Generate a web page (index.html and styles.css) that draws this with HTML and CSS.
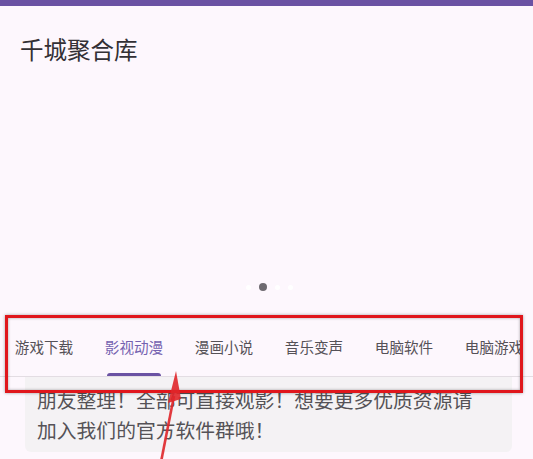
FILE: index.html
```html
<!DOCTYPE html>
<html>
<head>
	<title>千城聚合库</title>
	<meta charset="utf-8">
	<link rel="stylesheet" href="styles.css">
</head>
<body>
	<div class="page">
		<!-- 顶部状态色条 -->
		<div class="top-bar"></div>
		<!-- 标题 -->
		<div class="header">
			<h1 class="header-title">千城聚合库</h1>
		</div>
		<!-- 轮播区域 -->
		<div class="banner">
			<ul class="banner-dots">
				<li class="banner-dot"></li>
				<li class="banner-dot active"></li>
				<li class="banner-dot"></li>
				<li class="banner-dot"></li>
			</ul>
		</div>
		<!-- 分类标签 -->
		<div class="tabs">
			<div class="tab"><span class="tab-text">游戏下载</span></div>
			<div class="tab active"><span class="tab-text">影视动漫</span><span class="tab-indicator"></span></div>
			<div class="tab"><span class="tab-text">漫画小说</span></div>
			<div class="tab"><span class="tab-text">音乐变声</span></div>
			<div class="tab"><span class="tab-text">电脑软件</span></div>
			<div class="tab"><span class="tab-text">电脑游戏</span></div>
		</div>
		<!-- 说明卡片 -->
		<div class="notice">
			<p class="notice-text">朋友整理！全部可直接观影！想要更多优质资源请加入我们的官方软件群哦！</p>
		</div>

		<!-- 标注：红框和箭头 -->
		<div class="mark-box"></div>
		<svg class="mark-arrow" width="533" height="459" viewBox="0 0 533 459">
			<line x1="174" y1="396" x2="161" y2="462" stroke="#e0262a" stroke-width="2.6" opacity="0.9"/>
			<polygon points="176,371 168,403 181,399" fill="#e0262a" opacity="0.9"/>
		</svg>
	</div>
</body>
</html>
```

FILE: styles.css
```css
body {
	margin: 0;
	font-family: "Noto Sans CJK SC", "Noto Sans", Roboto, sans-serif;
	background-color: #fdf7fd;
}
.page {
	position: relative;
	width: 533px;
	height: 459px;
	overflow: hidden;
}
.top-bar {
	height: 6px;
	background-color: #6a52a3;
}
.header {
	height: 80px;
	padding: 0 20px;
	box-sizing: border-box;
}
.header-title {
	margin: 0;
	padding-top: 27px;
	font-size: 23.5px;
	line-height: 32px;
	font-weight: normal;
	color: #333035;
}
/* 轮播区 */
.banner {
	height: 229px;
	display: flex;
	justify-content: center;
	align-items: flex-end;
	padding-bottom: 24px;
	box-sizing: border-box;
}
.banner-dots {
	list-style: none;
	margin: 0;
	padding: 0 0 0 6px;
	display: flex;
	align-items: center;
	gap: 8px;
}
.banner-dot {
	width: 5px;
	height: 5px;
	border-radius: 50%;
	background-color: #ffffff;
}
.banner-dot.active {
	width: 8px;
	height: 8px;
	background-color: #6e6a70;
}
/* 标签栏 */
.tabs {
	height: 62px;
	display: flex;
	margin-left: -1px;
	border-bottom: 1px solid #e3dde3;
	box-sizing: border-box;
	white-space: nowrap;
}
.tab {
	flex: 0 0 90px;
	display: flex;
	flex-direction: column;
	align-items: center;
	justify-content: center;
	position: relative;
}
.tab-text {
	font-size: 14.6px;
	color: #555157;
	line-height: 20px;
	margin-top: 2px;
}
.tab.active .tab-text {
	color: #7562b0;
}
.tab-indicator {
	position: absolute;
	bottom: 0;
	width: 54px;
	height: 3px;
	border-radius: 3px 3px 0 0;
	background-color: #6a52a3;
}
/* 卡片 */
.notice {
	margin: 0 21px 0 25px;
	padding: 8px 35px 7px 12px;
	background-color: #f4f2f4;
	border-radius: 0 0 6px 6px;
}
.notice-text {
	margin: 0;
	font-size: 19.8px;
	line-height: 30px;
	color: #555257;
}
/* 标注 */
.mark-box {
	position: absolute;
	left: 5px;
	top: 315px;
	width: 518px;
	height: 78px;
	border: 3px solid #e0161c;
	box-sizing: border-box;
	box-shadow: 0 0 3px rgba(0,0,0,0.35), inset 0 0 3px rgba(0,0,0,0.35);
}
.mark-arrow {
	position: absolute;
	left: 0;
	top: 0;
}
```
